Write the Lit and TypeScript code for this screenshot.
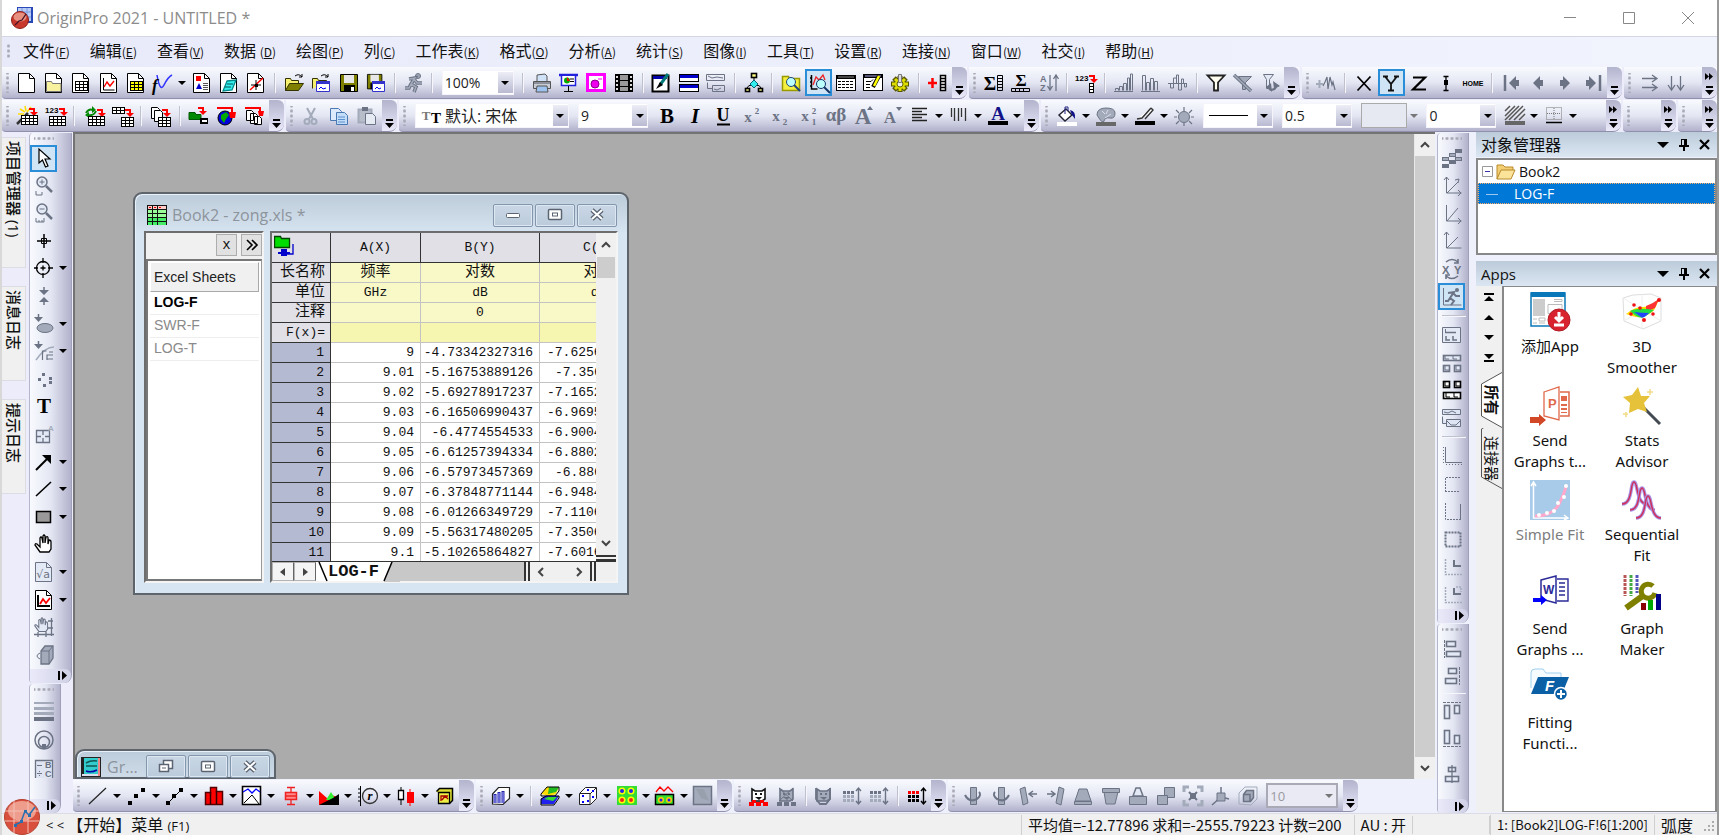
import { LitElement, html, css, nothing } from "lit";
import { customElement, property } from "lit/decorators.js";
import { classMap } from "lit/directives/class-map.js";
import { styleMap } from "lit/directives/style-map.js";
import { unsafeSVG } from "lit/directives/unsafe-svg.js";

/* ---------- icon drawing helpers ---------- */
const G = "#6b7384";
const L = "#a3abbb";
const p = (d: string, s = "#000", f = "none", w = 1) =>
  `<path d="${d}" stroke="${s}" fill="${f}" stroke-width="${w}"/>`;
const f = (d: string, c = "#000") => `<path d="${d}" fill="${c}"/>`;
const t = (x: number, y: number, s: string, size: number, c = "#000", extra = "") =>
  `<text x="${x}" y="${y}" font-size="${size}" fill="${c}" ${extra}>${s}</text>`;
const SERIF = `font-family="Liberation Serif" font-weight="bold" text-anchor="middle"`;
const SMALL = `font-family="Liberation Sans" font-weight="bold"`;
const page = (c = "#000", bg = "#fff") => p("M1.5 .5h11l5 5v14h-16z", c, bg) + p("M12.5 .5v5h5", c);
const cells = (x: number, y: number, c = 3, r = 3, line = "#000", bg = "#fff") => {
  let s = `<rect x="${x}" y="${y}" width="${c * 4 + 1}" height="${r * 3 + 1}" fill="${line}"/>`;
  for (let i = 0; i < c; i++)
    for (let j = 0; j < r; j++)
      s += `<rect x="${x + 1 + i * 4}" y="${y + 1 + j * 3}" width="3" height="2" fill="${bg}"/>`;
  return s;
};
const redDrop = (x: number, y: number) =>
  p(`M${x} ${y}h5v3`, "#f00", "none", 2) + f(`M${x + 1} ${y + 3}h8l-4 4z`, "#f00");
const frame = (c = G, bg = "#e4e9f6") => p("M.5 2.5h18v15h-18z", c, bg);
const miniL = (x: number, y: number, c = G) => p(`M${x} ${y}v4h4`, c, "none", 1);
const box = (x: number, y: number, w: number, h: number, c = G, bg = "#e4e9f6") =>
  `<rect x="${x + 0.5}" y="${y + 0.5}" width="${w}" height="${h}" fill="${bg}" stroke="${c}" stroke-width="1.6"/>`;
const magn = (x: number, y: number, c: string, bg: string) =>
  p(`M${x + 3} ${y + 3}l6 6`, c, "none", 2) + `<circle cx="${x}" cy="${y}" r="4.5" fill="${bg}" stroke="${c}"/>`;
const hand = (c: string, bg: string) =>
  p("M6 18L1 11q0-2 2-1l3 3V4q1-2 2 0l1 5V2q1-2 2 0v7l1-6q2-1 2 1v6l1-4q2 0 2 2v7l-2 3z", c, bg, 1.3);
const floppy = (x: number, y: number, s: number) =>
  `<g transform="translate(${x} ${y}) scale(${s})">` +
  p("M.5 .5h17v17h-17z", "#000", "#808000") + f("M4 1h10v8H4z", "#e8e8e8") + f("M4 11h11v7H4z") + f("M11 13h3v4h-3z", "#fff") + "</g>";
const axes = (c = G) => p("M4.5 1v16h15", c) + p("M2 4l2.5-3L7 4", c) + p("M5 17L16 6", c);
const ticks = "M3.5 1v15.5H20";
const cat = (c: string, bg: string) =>
  p("M3 15V3l3 2h7l3-2v10l-3 2z", c, bg, 1.6) + f("M6 7h2v2H6zM11 7h2v2h-2z", c) + f("M6 11h7l-3 3z", c);
const dots = (c: string, mid = c) => {
  let s = "";
  for (let i = 0; i < 3; i++)
    for (let j = 0; j < 3; j++)
      s += `<rect x="${1 + i * 4}" y="${5 + j * 4}" width="3" height="3" fill="${j === 0 ? mid : c}"/>`;
  return s;
};
const upDown = (c: string) => p("M16.500 2v16M14 5l2.500-3 2.500 3M14 15l2.500 3 2.500-3", c, "none", 1.4);

const ICONS: Record<string, string> = {
  "new-project": page(),
  "new-folder": page() + p("M2.500 18.500v-10h5l1 2h8.500v8z", "#777", "#f8f2a0"),
  "new-book": page() + cells(4, 8, 3, 3, "#000", "#fff"),
  "new-graph": page() + p("M4.500 5v12h11", "#000", "none", 1) + p("M5 14l3-5 3 4 4-5", "#f00", "none", 1.4),
  "new-matrix": page() + cells(4, 8, 3, 3, "#000", "#ff0"),
  "new-function": p("M4 2q3 18 7 10t8-10", "#33f", "none", 1.500) + t(-1, 18, "f", 17, "#000", `font-family="Liberation Serif" font-style="italic" font-weight="bold"`),
  "new-layout": page() + f("M4 3h5v5H4z", "#f00") + f("M4 16l3-6 3 6z", "#00c") + p("M11 10.500h5M11 12.500h5M11 14.500h5M11 16.500h5", "#555"),
  "new-notes": page() + p("M8 8l9-1-4 10-9 1z", "#088", "#3ee", 1.300) + p("M8 11h6M6 14h6", "#055"),
  "new-image": page() + p("M4 17L17 5", "#f00", "none", 1.500) + p("M10 7v10M5 12h10") + f("M9 11h3v3H9z"),
  "open": p("M1.500 17.500v-12h5l1 2h7v3", "#330", "#f5ef6e") + p("M1.500 17.500l4-7h14l-5 7z", "#330", "#808000") + p("M11 3q4-3 7 1m0-3v3h-3"),
  "open-excel": p("M1.500 15.500v-10h5l1 2h8v3", "#330", "#f5ef6e") + p("M10 3q4-3 7 1m0-3v3h-3") + p("M5.500 9.500h13v9h-13z", "#33c", "#fff") + f("M5 8h14v3H5z", "#33c") + p("M8 16l2-2 2 2 3-1", "#00f"),
  "save": floppy(1, 1, 1),
  "save-as": floppy(1, 1, 0.850) + p("M6.500 9.500h12v9h-12z", "#33c", "#fff") + f("M6 8h13v3H6z", "#33c") + p("M9 16l2-2 2 2 2-1", "#00f"),
  "runner": `<circle cx="14" cy="3" r="2.500" fill="${L}" stroke="${G}"/>` + p("M5 6l6-1-4 6 5 3-2 5M7 11l-2 4H1M10 6l3 4h5", G, "none", 3.500) + p("M5 6l6-1-4 6 5 3-2 5M7 11l-2 4H1M10 6l3 4h5", L, "none", 1.500),
  "print": p("M5 8V2l8-1 2 2v5", "#555", "#cfe2f8") + p("M1.500 8.500h17v7h-17z", "#555", "#c8ccd4") + p("M5 13h10l1 6H4z", "#555", "#9dc3ee") + f("M2 9h16v2H2z", "#8a8f99"),
  "slide": p("M0 2h19", "#22d", "none", 2.500) + p("M2.500 3v9.500h14V3", "#22d", "#fff", 1.500) + `<circle cx="8" cy="7.500" r="3" fill="#0a0"/>` + f("M8 4v4h3z", "#f00") + p("M11 6h4M11 8.500h4M9.500 13v5M5 18.500h9"),
  "movie": f("M0 0h20v19H0z", "#f0f") + f("M3 3h14v13H3z", "#fff") + `<circle cx="9" cy="11" r="4" fill="#e0e" stroke="#808"/>` + p("M12 6h4", "#f0f"),
  "film": f("M1 1h18v18H1z") + f("M6 2h8v5H6zM6 8h8v5H6zM6 14h8v4H6z", "#999") + f("M2 3h2v2H2zM2 7h2v2H2zM2 11h2v2H2zM2 15h2v2H2zM16 3h2v2h-2zM16 7h2v2h-2zM16 11h2v2h-2zM16 15h2v2h-2z", "#ddd"),
  "edit-graph": p("M1.500 2.500h16v16h-16z", "#000", "#fff", 2) + f("M2 3h14v3H2z", "#00a") + p("M17 1L9 12", "#077", "none", 3) + f("M5 16l4-7 3 3z"),
  "split": f("M0 1h20v8H0zM0 11h20v8H0z") + f("M1 2h18v3H1zM1 12h18v3H1z", "#00c") + f("M1 5h18v3H1zM1 15h18v3H1z", "#fff"),
  "merge": p("M.5 1.500h18v6H.5zM6.500 12.500h12v6h-12zM1.500 9.500v6h5", G) + p("M2 3l4 2 5-1 6 1M8 16l3 1 4-2", G),
  "tree": p("M10 5v4M8 12q-4 0-5 3M12 12q4 0 5 3") + box(7, 0, 5, 4, "#000", "#ff8") + p("M10 7l4 4-4 4-4-4z", "#067", "#3ee") + box(1, 15, 4, 3, "#000", "#ff8") + box(14, 15, 4, 3, "#000", "#ff8"),
  "find-folder": p("M1.500 17.500V3.500h6l1 2h10v12z", "#990", "#f5ef3e", 1.500) + magn(10, 9, "#247", "#bff"),
  "zoom-graph": p("M2.500 2v14h6M1 5h2M1 9h2M1 13h2", "#000", "none", 1.500) + p("M4 12l3-8 3 3 4-5 2 5", "#e22", "none", 1.300) + magn(12, 11, "#136", "#bff"),
  "sheet": f("M0 2h20v16H0z") + f("M1 6h18v11H1z", "#fff") + f("M2 3h16v2H2z", "#444") + p("M2 8.500h3m1 0h3m1 0h3m1 0h3M2 11.500h3m1 0h3m1 0h3m1 0h3M2 14.500h3m1 0h3m1 0h3m1 0h3"),
  "sheet-edit": f("M0 1h20v17H0z") + f("M1 5h18v12H1z", "#fff") + f("M2 2h16v2H2z", "#557") + p("M3 8.500h5l2-2M3 11.500h4M3 14.500h4") + p("M16 3l-6 11", "#000", "none", 4) + p("M16 3l-5 10", "#ff0", "none", 2.500),
  "gear": p("M10 3v16M1 11h18M4 5l12 12M16 5L4 17", "#550", "none", 5) + p("M10 4v14M2 11h16M5 6l10 10M15 6L5 16", "#dd0", "none", 3) + `<circle cx="10" cy="11" r="5" fill="#dd0"/><circle cx="10" cy="11" r="3" fill="#eee" stroke="#660"/>` + p("M8.500 1.500h3v8h-3z", "#777", "#ddd"),
  "add-col": p("M0 10h9M4.500 5v10", "#f00", "none", 2.500) + p("M12.500 2.500h5v15h-5zM13 5.500h5M13 8.500h5M13 11.500h5M13 14.500h5", "#000", "#fff", 1.500),
  "sum-col": t(6, 17, "Σ", 19, "#000", SERIF) + p("M13.500 2.500h5v15h-5zM13 5.500h6M13 8.500h6M13 11.500h6M13 14.500h6"),
  "sum-row": t(10, 13, "Σ", 17, "#000", SERIF) + p("M.5 15.500h18v3H.5zM4.500 15v4M8.500 15v4M12.500 15v4"),
  "sort": t(1, 9, "A", 9, G, SMALL) + t(1, 18, "Z", 9, G, SMALL) + p("M11 2v14M8.500 13l2.500 4 2.500-4M17 18V3M14.500 6L17 2l2.500 4", G, "none", 1.300),
  "fill-123": t(-1, 8, "123", 8, "#000", SMALL) + redDrop(13, 3) + `<g transform="translate(2 0)">${cells(11, 10, 1, 3)}</g>`,
  "bars-up": p("M1.500 17.500v-2h3v2M5.500 17.500v-4h3v4M9.500 17.500v-7h3v7M13.500 17.500V5h2v12.500M16.500 17.500V1h2v16.500M0 18.500h19", G),
  "bars": p("M1.500 17.500V2.500h3v15M5.500 17.500v-8h3v8M9.500 17.500v-12h3v12M13.500 17.500v-9h3v9M0 18.500h19", G),
  "bars-dev": p("M0 10.500h19M2.500 10v5h3v-5M5.500 10V5h3v5M8.500 10V2h2v8M10.500 10v7h3v-7M13.500 10V6h2v4M16.500 10v4h2v-4", G),
  "filter": p("M1.500 2.500h17l-6.500 7v8h-4v-8z", "#222", "#fffef0", 1.800),
  "filter-off": p("M5.500 3.500h13l-6 6v7h-3v-7z", G, L) + p("M1 2l17 16", G, "none", 3.500) + p("M1 2l17 16", L, "none", 1.500),
  "filter-redo": p("M2.500 1.500h10l-4 5v9h-3v-9z", G, "#e4e9f6") + f("M12 8l7 5-6 3zM5 14l5-4 1 9z", G) + p("M8 16q5 2 7-2", G, "none", 2),
  "peaks": p("M0 11h7M3.500 7v8", L, "none", 2) + p("M7 13l2-4 2-5 1 12 2-12 2 8 1-3 2 8", G, "none", 1.200),
  "x": p("M3.500 3.500l13 14M16.500 3.500l-13 14", "#000", "none", 1.800),
  "y": p("M2 3.500h5M13 3.500h5M4.500 4l5.500 7 5.500-7M10 11v7M7 17.500h6", "#111", "none", 1.800),
  "z": p("M4 4.500h12L4 16.500h13", "#000", "none", 2.200),
  "err": p("M10 3v14M7.500 3.500h5M7.500 17.500h5", "#000", "none", 1.300) + f("M8 7h4v5H8z"),
  "home": t(10, 13, "HOME", 7, "#000", `${SMALL} text-anchor="middle"`),
  "first": p("M4 2v16", G, "none", 2.500) + f("M8 10l7-7v4h3v6h-3v4z", G),
  "prev": f("M5 10l7-7v4h3v6h-3v4z", G),
  "next": f("M15 10L8 3v4H5v6h3v4z", G),
  "last": p("M17 2v16", G, "none", 2.500) + f("M13 10L6 3v4H3v6h3v4z", G),
  "arrows-right": p("M3 5.500h15M13 2l5 3.500L13 9M3 14.500h15M13 11l5 3.500-5 3.500", G, "none", 1.300),
  "arrows-down": p("M5.500 3v14M2 12l3.500 5L9 12M14.500 3v14M11 12l3.500 5 3.500-5", G, "none", 1.300),

  "wizard": p("M0 18L11 7", "#333", "none", 2.500) + p("M8 0l1 5M3 3l5 3M14 1l-4 5M1 8h6", "#fd0", "none", 1.500) + redDrop(12, 3) + cells(4, 9, 4, 3),
  "import-ascii": t(0, 7, "123", 8, "#000", SMALL) + redDrop(14, 3) + cells(4, 10, 4, 3),
  "reimport": p("M2 7q3-5 7-3M12 5q-2 5-8 4", "#080", "none", 2) + f("M8 0l4 4-4 3zM5 6v6L1 9z", "#080") + redDrop(13, 4) + cells(4, 10, 4, 3),
  "clone-import": cells(0, 1, 3, 2) + redDrop(13, 4) + cells(9, 11, 3, 3, "#000", "#fff"),
  "import-pages": p("M1.500 1.500h6l2 2v9h-8z", "#000", "#fff") + p("M4.500 4.500h6l2 2v9h-8z", "#000", "#fff") + redDrop(12, 4) + cells(8, 11, 3, 3),
  "connect-folder": p("M0 6.500h6l1 2h5v5H0z", "#050", "#080") + redDrop(9, 2) + f("M11 12h8v6h-8z") + f("M13 14h5v2h-5z", "#fff"),
  "connect-web": `<circle cx="8" cy="12" r="7" fill="#00d" stroke="#000"/>` + f("M4 9l5-3 3 3-3 4-2 4-3-4z", "#0a0") + p("M0 2h15v4", "#f00", "none", 2) + f("M12 6h7l-1 6h-5z", "#f00"),
  "connect-pages": p("M1.500 4.500h5l2 2v8h-7zM5.500 7.500h5l2 2v8h-7zM9.500 10.500h5l2 2v6h-7z", "#000", "#fff") + p("M0 2h15v4", "#f00", "none", 2) + f("M13 5h6l-1 5h-4z", "#f00"),
  "cut": p("M6 2l6 11M14 2L8 13", L, "none", 2) + `<circle cx="6" cy="15.500" r="2.500" fill="none" stroke="${L}" stroke-width="2"/><circle cx="13" cy="15.500" r="2.500" fill="none" stroke="${L}" stroke-width="2"/>`,
  "copy": p("M1.500 2.500h8l3 3v9h-11z", "#4a78b0", "#dceafb") + p("M7.500 6.500h8l3 3v9h-11z", "#4a78b0", "#c3dcf7") + p("M9 11h7M9 13.500h7M9 16h7", "#5d92d0"),
  "paste": p("M1.500 3.500h13v13h-13z", L, "#b8bdca", 2) + f("M5 1h6v4H5z", G) + p("M8.500 7.500h7l3 3v8h-10z", G, "#e6eaf2"),
  "bold": t(10, 17, "B", 21, "#000", SERIF),
  "italic": t(10, 17, "I", 21, "#000", SERIF + ` font-style="italic"`),
  "underline": t(10, 15, "U", 18, "#000", SERIF) + p("M4 18.500h13", "#000", "none", 2),
  "sup": t(7, 16, "x", 15, G, SERIF) + t(16, 8, "2", 9, G, SERIF),
  "sub": t(7, 15, "x", 15, G, SERIF) + t(16, 19, "2", 9, G, SERIF),
  "supsub": t(7, 15, "x", 15, G, SERIF) + t(16, 8, "2", 9, G, SERIF) + t(16, 19, "1", 9, G, SERIF),
  "greek": t(10, 15, "αβ", 19, G, SERIF),
  "bigger": t(9, 18, "A", 23, G, SERIF) + f("M13 4l3-4 3 4z", G),
  "smaller": t(8, 17, "A", 17, G, SERIF) + f("M14 1h6l-3 4z", G),
  "align": p("M2 2.500h15M2 5.500h10M2 8.500h15M2 11.500h10M2 14.500h15", "#222", "none", 1.500),
  "columns": p("M2.500 2v9M5.500 2v13M9.500 2v13M12.500 2v9M16.500 2v13", "#333", "none", 1.300),
  "font-color": t(10, 14, "A", 19, "#118", SERIF) + f("M0 15h20v4H0z"),
  "fill": p("M9 3l6 6-7 6-6-6z", "#223", "#fff", 1.400) + p("M8 8V1h3v4", "#228") + f("M13 4q6 1 5 9l-3-4z", "#118") + f("M0 16h20v4H0z", "#fff"),
  "palette": p("M1 9q0-7 9-7t9 5q0 6-5 5t-6 3-7-6z", G, L) + p("M6 5l3 3m3-4l-2 4m5 0l-6 4", "#dde") + f("M0 16h20v4H0z", "#686868"),
  "line-color": p("M16 2L7 12l-5 1M16 2l2 2-8 9", "#333", "#fff", 1.400) + f("M0 15h20v4H0z"),
  "light": `<circle cx="10" cy="11" r="5.500" fill="${L}" stroke="${G}"/>` + p("M10 1v4M2 4l3 3M18 4l-3 3M0 11h3M17 11h3M2 18l3-3M18 18l-3-3M10 17v3", G, "none", 1.200),
  "pattern": p("M0 5l5-5M0 10L10 0M0 14L14 0M4 14L18 0M9 14L20 3M14 14l6-6", "#555", "none", 1.500) + f("M0 15h20v4H0z", "#666"),
  "borders": `<path d="M2.500 1.500h15v12h-15zM10 2v12M3 7.500h14" fill="none" stroke="#777" stroke-dasharray="1 1"/>` + p("M2 16.500h16", "#000", "none", 1.500),

  "pointer": p("M5 1v14l3.500-3 3 7 2.500-1-3-7h5z", "#000", "#fff", 1.200),
  "zoom-in": `<circle cx="8" cy="6" r="5" fill="#e4e9f6" stroke="${G}" stroke-width="1.500"/>` + p("M5.500 6h5M8 3.500v5M2 15v4h6v-3", G) + p("M12 10l6 6", G, "none", 2.500),
  "zoom-out": `<circle cx="8" cy="6" r="5" fill="#e4e9f6" stroke="${G}" stroke-width="1.500"/>` + p("M5.500 6h5M2 15v4h8v-4M5 17v2M8 17v2", G) + p("M12 10l6 6", G, "none", 2.500),
  "reader": p("M10 3v14M3 10h14", "#000", "none", 1.500) + p("M7.500 7.500h5v5h-5z"),
  "target": `<circle cx="9" cy="10" r="6.500" fill="none" stroke="#000" stroke-width="1.300"/>` + p("M9 0v5M9 15v5M0 10h4M14 10h5M6.500 10h5M9 7.500v5", "#000", "none", 1.300),
  "select-range": p("M10 1v6M10 19v-6", G, "none", 1.500) + f("M5 4h10l-5 5zM5 16h10l-5-5z", G),
  "mask": f("M0 3h9l-4.500 5z", G) + p("M4.500 0v4", G, "none", 1.500) + `<ellipse cx="11" cy="14" rx="8" ry="4.500" fill="${L}" stroke="${G}"/>`,
  "mask-curve": f("M0 3h9l-4.500 5z", G) + p("M4.500 0v4", G, "none", 1.500) + p("M2 19Q11 6 20 6", L, "none", 1.500) + p("M8.500 19v-9h4M13 19v-5h6M13 18h6M15 11h4", G, "none", 1.200),
  "draw-dots": f("M8 4h3v3H8zM15 8h3v3h-3zM4 9h3v3H4zM15 12h3v3h-3zM9 15h3v3H9z", G),
  "text": t(10, 17, "T", 21, "#000", SERIF),
  "grid-a": p("M2.500 6.500h13v12h-13zM9 7v4M9 14v4M3 12.500h4M11 12.500h4", G, "#e4e9f6", 1.300) + t(14, 7, "A", 8, L, SMALL),
  "arrow": p("M2 18L14 6", "#000", "none", 2) + f("M17 3v9L8 3z"),
  "line": p("M2 17L17 3", "#000", "none", 1.600),
  "line-thin": p("M1 18L18 2", "#222", "none", 1.200),
  "rect": p("M2.500 4.500h14v11h-14z", "#000", "#999", 1.500),
  "pan": hand("#000", "#fff"),
  "formula": page(G, "#e4e9f6") + t(9, 16, "√a", 11, G, `font-family="DejaVu Sans" text-anchor="middle"`),
  "insert-graph": page() + p("M4 5v11h12", "#000", "none", 2) + p("M6 14l3-5 3 4 4-5", "#f00", "none", 1.800),
  "pan-axis": `<g transform="scale(.8)">${hand(G, "#e4e9f6")}</g>` + p("M17.500 1v18M14 4h5M14 11h5M0 17.500h20M4 15v5M12 15v5", G, "none", 1.300),
  "cube": p("M7 6l4-5h8v12l-4 6H7z", G, L, 1.300) + p("M7 6h8v13M15 6l4-5", G) + p("M6 8q-6 3 0 6", G),
  "lines": f("M0 1h20v2H0z", L) + f("M0 6h20v3H0zM0 11h20v3H0z", L) + f("M0 16h20v4H0z", G),
  "arc": `<circle cx="10" cy="10" r="9" fill="none" stroke="${G}" stroke-width="1.500"/><circle cx="10" cy="12" r="5.500" fill="none" stroke="${G}" stroke-width="1.500"/>` + f("M8 14h4v5H8z", G),
  "legend": p("M1.500 19V1.500h17V19", G, "#dfe4f2", 1.300) + p("M3 6.500h5M3 14.500h5M5.500 12v1M5.500 16v1", G) + t(11, 9, "B", 9, G, SMALL) + t(11, 18, "C", 9, G, SMALL),

  "layers": f("M13 1h7v4h-7zM7 5h7v4H7zM0 9h7v4H0zM13 9h7v4h-7zM7 12h7v4H7zM0 16h7v4H0z", G) + f("M8 6h5v2H8zM1 10h5v2H1zM14 10h5v2h-5z", L),
  "axis-diag": axes() + p("M13 4l4-1-1 4M16 14l3 3-3 3", G),
  "axis-right": p("M4.500 1v16h15M5 17L16 4M16 14l3 3-3 3", G),
  "axis-up": axes(),
  "swap-xy": t(0, 15, "X", 11, G, SMALL) + t(12, 15, "Y", 11, G, SMALL) + p("M4 3q6-5 12 0m0-3v4h-4M16 17q-6 5-12 0m0 3v-4h4", G, "none", 1.600),
  "speed": p("M1.500 1v17h18", G) + `<circle cx="15" cy="3" r="2" fill="${G}"/>` + p("M6 6l6-1-4 6 4 3-3 4M8 11l-2 3H3M11 6l3 3h4", G, "none", 2),
  "layout-1": frame() + p("M3 7.500h11M4 11v4h4M11 11v4h4", G, "none", 1.500) + p("M3.500 4v3", G),
  "layout-2": box(1, 2, 17, 5) + box(1, 12, 6, 6) + box(12, 12, 6, 6) + miniL(3, 2) + miniL(11, 2) + miniL(3, 13) + miniL(14, 13),
  "layout-3": box(1, 1, 6, 6, "#000", "#fff") + box(12, 1, 6, 6, "#000", "#fff") + box(1, 12, 17, 6, "#000", "#fff") + miniL(3, 2, "#000") + miniL(14, 2, "#000") + miniL(4, 13, "#000") + miniL(12, 13, "#000"),
  "layout-4": p("M.5 1.500h18v5H.5zM4.500 11.500h14v7h-14zM.5 8.500v7h4", G, "#dfe4f2") + p("M2 4l4 1 4-2 4 2M5 13l4 4h5l4-4", G),
  "frame-l": `<path d="${ticks}" fill="none" stroke="${G}"/><path d="M1.500 1v16M4 18.500h16" stroke="${G}" stroke-dasharray="1 2" fill="none"/>`,
  "frame-t": `<path d="M3.500 18V3.500H18M3 17.500h15" fill="none" stroke="${G}" stroke-dasharray="2 1"/>`,
  "frame-r": `<path d="M3.500 1v16.500h15V2" fill="none" stroke="${G}" stroke-dasharray="2 1"/><path d="M18.500 2v16" stroke="${G}"/>`,
  "frame-all": `<path d="M3.500 3.500h15v14h-15z" fill="none" stroke="${G}" stroke-width="2" stroke-dasharray="2 1"/>`,
  "frame-in": `<path d="M3.500 2v15.500H20" fill="none" stroke="${L}" stroke-width="1.500" stroke-dasharray="2 1"/>` + p("M12 3v6h7", G, "none", 2),
  "frame-in2": `<path d="M3.500 2v15.500H20M14 2h5v5" fill="none" stroke="${L}" stroke-width="1.500" stroke-dasharray="2 1"/>` + p("M12 3v6h7", G, "none", 2),
  "al-left": `<path d="M2.500 1v18" stroke="${G}" stroke-dasharray="3 1"/>` + box(4, 2, 9, 5) + box(4, 12, 14, 5),
  "al-right": `<path d="M17.500 1v18" stroke="${G}" stroke-dasharray="3 1"/>` + box(6, 2, 8, 5) + box(3, 12, 11, 5),
  "al-top": `<path d="M1 1.500h18" stroke="${G}" stroke-dasharray="3 1"/>` + box(2, 4, 5, 13) + box(12, 4, 5, 8),
  "al-bottom": `<path d="M1 18.500h18" stroke="${G}" stroke-dasharray="3 1"/>` + box(2, 2, 5, 13) + box(12, 7, 5, 8),
  "al-center": box(6, 3, 7, 4) + box(3, 12, 13, 5) + p("M10 1v18", G, "none", 1.300),

  "scatter": f("M1 15h4v4H1zM7 8h4v4H7zM14 2h4v4h-4z"),
  "line-symbol": p("M3 17l6-6 8-8") + f("M1 15h4v4H1zM7 8h4v4H7zM14 2h4v4h-4z"),
  "column": p("M1.500 18.500v-12h5v-5h6v4h6v13z", "#500", "#f00", 1.500) + p("M6.500 6v12M12.500 5v13", "#300", "none", 1.500),
  "multi": p("M.5 .5h18v18H.5z", "#000", "#fff", 1.600) + p("M1 6l5-3 4 4 4-4 4 3", "#00f", "none", 1.300) + p("M2 17l8-8 7 9"),
  "box-plot": p("M10 1v5M10 14v5M6 1.500h8M6 18.500h8", "#e22", "none", 1.300) + p("M4.500 6.500h11v7h-11zM5 10h10", "#e22", "#f88", 1.500),
  "area": f("M0 5v14h20v-7l-7-3-4 4z", "#f00") + f("M7 14l5-8 5 8z", "#3e3") + f("M0 19l14-7 6-4v11z"),
  "polar": p("M2.500 0v20M0 3h2M0 7h2M0 11h2M0 15h2") + `<circle cx="12" cy="10" r="7.500" fill="none" stroke="#333" stroke-width="1.300"/>` + t(12, 14, "r", 13, "#000", SERIF + ` font-style="italic"`),
  "stock": p("M5 1v18") + p("M2.500 4.500h5v9h-5z", "#000", "#fff", 1.300) + p("M14 3v17", "#f00") + f("M11 6h7v11h-7z", "#f00"),
  "template": p("M1.500 5.500l3-3h13v12l-3 3", "#000", "#dd3", 1.500) + p("M3.500 6.500h11v11h-11z", "#000", "#ee4", 1.300) + p("M6 15v-5h7M7 14l3-4 3 3", "#a00", "none", 1.300),
  "bars-3d": p("M1.500 18V8l6-6.500h11v11L12 18.500z", "#222", "#fff", 1.200) + p("M4 17V8M8 17V6M12 17V5", "#22a", "none", 3) + p("M4 17V9M8 17V7M12 17V6", "#aaf", "none", 1),
  "surface": f("M1 8l6-7h12l-3 7-6 2z", "#fd0") + f("M9 1h10l-3 5-8 2z", "#2b2") + p("M1 8l6-7h12v4l-4 5H1z", "#000", "none") + f("M1 13l4-3h14l-5 8H1z", "#22e") + f("M4 13l4-2h9l-4 4z", "#3d3") + p("M1 18v-5l5-3h13v2l-5 7H1z"),
  "scatter-3d": p("M1.500 7.500l6-6h11v11l-6 6h-11zM2 7.500h10v11M12 8l6-6", "#222", "#fff") + f("M4 9h2v2H4zM9 14h2v2H9zM4 15h2v2H4zM14 10h2v2h-2zM9 3h2v2H9zM14 4h2v2h-2z", "#00f"),
  "contour": f("M0 0h20v19H0z", "#3d3") + `<g fill="#ff0"><circle cx="5" cy="5" r="3.500"/><circle cx="14" cy="5" r="3.500"/><circle cx="5" cy="14" r="3.500"/><circle cx="14" cy="14" r="3.500"/></g><g fill="#e22"><circle cx="5" cy="14" r="2"/><circle cx="14" cy="14" r="2"/></g><g fill="#22e"><circle cx="5" cy="5" r="2"/><circle cx="14" cy="5" r="2"/></g>`,
  "profile": p("M1 6l4-5 4 4 4-4 5 5", "#f00", "none", 1.300) + p("M.5 8.500h18v10H.5z", "#000", "#3d3", 1.500) + `<circle cx="6" cy="14" r="3" fill="#fc0"/><circle cx="14" cy="14" r="3" fill="#fc0"/><circle cx="6" cy="14" r="1.500" fill="#22e"/><circle cx="14" cy="14" r="1.500" fill="#22e"/>`,
  "image": p("M.5 .5h18v18H.5z", G, L, 1.500) + f("M3 3h8l5 12-8-3z", "#98a0ae"),
  "cat": cat("#111", "#fff") + f("M0 16h5v4H0zM7 16h5v4H7zM14 16h5v4h-5zM3 14h4v3H3zM11 14h4v3h-4z", "#f00"),
  "cat-off": cat(G, L) + f("M0 16h5v4H0zM7 16h5v4H7zM14 16h5v4h-5z", G) + p("M2 2l14 13M16 2L2 15", G),
  "cat-mask": cat(G, L) + p("M2 2v11l4 5h6l4-5V2", G, "none", 1.800),
  "dots-1": dots(L, G) + upDown(G),
  "dots-2": dots(L, G) + upDown(G),
  "dots-3": dots("#000", "#f00") + upDown("#000"),
  "spin-l": p("M7.500 1.500h6v17h-6z", G, L) + p("M2 9q4 8 12 4 5-4 2-7", G, "none", 2),
  "spin-r": p("M7.500 1.500h6v17h-6z", G, L) + p("M18 9q-4 8-12 4-5-4-2-7", G, "none", 2),
  "tilt-l": p("M2 3l5-2 3 16-5 2z", G, L) + p("M19 8h-7M15 5l-4 3 4 3", G, "none", 1.500),
  "tilt-r": p("M18 3l-5-2-3 16 5 2z", G, L) + p("M1 8h7M5 5l4 3-4 3", G, "none", 1.500),
  "persp-up": p("M6 3h8l4 12H2z", G, L) + p("M1.500 15.500h17v3h-17z", G, L),
  "persp-down": p("M5 18h9l3-12H3z", G, L) + p("M1.500 2.500h17v4h-17z", G, L),
  "persp-mid": p("M5 10l3-8h4l3 8z", G, "#e4e9f6", 1.500) + p("M1.500 10.500h17v8h-17z", G, L),
  "resize-3d": p("M8.500 1.500h10v10h-10z", G, L) + p("M1.500 9.500h10v9h-10z", G, L),
  "fit-3d": p("M6 6l8 8M14 6l-8 8", G, "none", 2) + f("M7 7h6v6H7z", G) + p("M1 6V1h5M14 1h5v5M19 14v5h-5M6 19H1v-5", L, "none", 3),
  "axes-3d": p("M10 1v10l8 2M10 11l-9 8", G, "none", 1.500) + p("M6 7h8v8H6z", G, L),
  "frame-3d": p("M1 18V7l6-6h12v12l-6 6z", L) + p("M5.500 8.500l3-4h7v7l-3 4h-7zM6 8.500h6v7", G, L, 1.500),
};

const APP_ART: Record<string, string> = {
  add: p("M1 1h34v33H1z", "#0a78b8", "#fff", 1.500) + f("M1 0h34v5H1z", "#0a78b8") + f("M3 7h12v17H3z", "#ccc") + p("M18 12.500h14v9H18zM24 7.500h8v2h-8M3 27h4M9 26h6v3H9zM3 31h4M9 31h6", "#bbb") + `<circle cx="29" cy="28" r="11" fill="#d8232e" stroke="#b01c26"/>` + p("M29 20v8M25 25l4 4 4-4M24 33h10", "#fff", "none", 3),
  smoother: p("M1 6l10-3 18-1 10 4v23l-18 8-19-8z", "#ddd") + p("M20 2v35M1 6l38 23M39 6L2 29", "#eee") + f("M4 22q10-8 16-7t17-8q-3 8-5 11t-9 6-19-2z", "#fd0") + f("M24 14q8-3 13-7l-4 9-9 4z", "#f33") + f("M8 19q8-4 24-1-5 4-10 7t-14-6z", "#2d4") + f("M12 20q9 1 15 1-6 6-8 4z", "#24f") + `<g fill="#e11"><circle cx="37" cy="8" r="2"/><circle cx="12" cy="13" r="1.800"/><circle cx="9" cy="22" r="1.800"/><circle cx="31" cy="22" r="1.800"/><circle cx="22" cy="28" r="2"/><circle cx="18" cy="16" r="1.800"/></g>`,
  ppt: p("M14 6l15-5v33l-15-4z", "#e0694b", "#fff", 1.300) + p("M30 6h9v24H30", "#e0694b", "#fff", 1.500) + t(18, 22, "P", 13, "#e0694b", SMALL) + f("M31 10h6v5h-6zM31 18h6v2h-6zM31 22h6v2h-6zM31 26h6v1h-6z", "#e0694b") + f("M0 31h9v-3l7 6-7 6v-3H0z", "#d24726"),
  wand: p("M20 20l18 18", "#444a52", "none", 3) + f("M16 1l3 9 9 0-6 7 3 9-9-3-9 4 1-10-7-6 9-2z", "#e5c23a") + p("M28 3v6M25 6h6M4 26v5M1 28h5", "#f3dc8a", "none", 1.500),
  fit: f("M0 0h40v40H0z", "#a9cbea") + p("M3.500 3v35H38M1 6l2.500-4L6 6M34 35l4 3-4 2", "#fff", "none", 1.500) + p("M5 36q18 0 24-12T36 6", "#ffa8cc", "none", 3) + `<g fill="#fff"><circle cx="9" cy="35" r="2"/><circle cx="17" cy="33" r="2"/><circle cx="24" cy="31" r="2"/><circle cx="28" cy="23" r="2"/><circle cx="34" cy="17" r="2"/><circle cx="36" cy="6" r="2"/></g>`,
  seq: [[0, 24, 22], [8, 30, 22], [14, 38, 22]].map(([x, y, h]) => { const d = `M${x} ${y}c11 0 8-${h} 12-${h}s2 ${h} 13 ${h}`; return p(d, "#a794e6", "none", 3.500) + p(d, "#d0305a", "none", 1.500); }).join(""),
  word: p("M11 6l15-4v27l-15-4z", "#2b2b99", "#fff", 1.500) + p("M27 5h11v22H27M29 9h6M29 13h6M29 17h6M29 21h6", "#2b2b99", "none", 1.400) + t(13, 20, "W", 12, "#2b2b99", SMALL) + f("M3 24h8v-3l6 5-6 5v-3H3z", "#00f"),
  maker: `<path d="M3 1v21" stroke-width="3" stroke-dasharray="3 1" stroke="#b55"/><path d="M9 1v21" stroke-width="3" stroke-dasharray="3 1" stroke="#4a4"/><path d="M15 1v18" stroke-width="3" stroke-dasharray="3 1" stroke="#55b"/>` + p("M4 34l18-13", "#808000", "none", 6) + `<path d="M31 12a7 7 0 1 0 2 7" fill="none" stroke="#808000" stroke-width="5"/>` + f("M19 29h5v7h-5z", "#800") + f("M26 26h5v10h-5z", "#0a0") + f("M34 20h5v16h-5z", "#008"),
  folder: p("M1 20V5q0-4 4-4h8l3 4h15v4", "#9fd0f0", "#f6fbff") + f("M8 9h31l-7 17H1z", "#0b5fa5") + t(15, 23, "F", 15, "#fff", `${SMALL} font-style="italic"`) + `<circle cx="31" cy="26" r="6.500" fill="#0b5fa5" stroke="#fff" stroke-width="1.500"/>` + p("M27 26h8M31 22v8", "#fff", "none", 2),
};

/* ---------- toolbar ---------- */
interface Combo { kind: string; value: string; label: string; off?: boolean }
type Item = string | Combo;

@customElement("tool-bar")
class ToolBar extends LitElement {
  @property({ type: Array }) items: Item[] = [];
  @property({ type: Boolean, reflect: true }) vertical = false;
  @property({ type: Boolean }) clipped = false;

  static styles = css`
    :host {
      display: flex;
      align-items: center;
      justify-content: space-between;
      box-sizing: border-box;
      height: 32px;
      background: linear-gradient(#f8fafe, #e4e7f3 50%, #b2b2cc);
      border-bottom: 1px solid #9090ad;
      border-radius: 0 0 8px 4px;
      overflow: hidden;
    }
    :host([vertical]) {
      flex-direction: column;
      align-items: stretch;
      height: auto;
      background: linear-gradient(to right, #f8fafe, #e4e7f3 50%, #b2b2cc);
      border: 0;
      border-right: 1px solid #a0a0ba;
      border-left: 1px solid #b4b6cc;
      border-radius: 4px 0 8px 4px;
    }
    svg { display: block; width: 20px; height: 20px; overflow: visible; }
    button { flex: none; border: 0; padding: 0; background: none; display: grid; place-items: center; font: inherit; }
    .item { display: flex; align-items: center; }
    .btn { width: 27px; height: 27px; border: 1px solid transparent; }
    .btn.on { background: #cfe4f5; border: 2px solid #2a8dd8; }
    .arr { width: 11px; height: 20px; }
    .tri { border: 4px solid transparent; border-top-color: #000; border-bottom: 0; }
    .tri.off { border-top-color: #777; }
    .sep { width: 2px; height: 20px; margin: 0 4px; background: linear-gradient(to right, #bfc1ce 50%, #f6f6fc 50%); }
    .gap { width: 12px; flex: none; }
    .grip { width: 11px; height: 20px; flex: none; background: radial-gradient(circle, #a9a9b6 1px, transparent 2px) center / 5px 5px repeat-y; }
    .more { width: 15px; height: 32px; flex: none; background: linear-gradient(#b3b4cd, #dadaee 70%, #ececfa); display: flex; flex-direction: column; align-items: center; justify-content: flex-end; border-radius: 0 6px 0 0; }
    .more svg { width: 9px; height: 9px; margin: 0 0 4px; }
    .more.two { justify-content: space-between; padding-top: 5px; box-sizing: border-box; }
    :host([vertical]) .grip { width: 20px; height: 11px; margin: 0 4px; background: radial-gradient(circle, #a9a9b6 1px, transparent 2px) center / 5px 5px repeat-x; }
    :host([vertical]) .sep { width: 24px; height: 2px; margin: 4px; background: linear-gradient(#bfc1ce 50%, #f6f6fc 50%); }
    :host([vertical]) .gap { height: 12px; }
    :host([vertical]) .more { width: auto; height: 14px; background: linear-gradient(to right, #eaeafa, #d0d0e6); align-items: flex-end; justify-content: center; padding-right: 4px; }
    :host([vertical]) .more svg { margin: 0; }
    .combo { display: flex; align-items: center; position: relative; height: 25px; background: #fff; margin: 0 4px; box-sizing: border-box; border: 1px solid #f4f4fa; }
    .combo select { appearance: none; border: 0; background: none; font: 14px "Open Sans", "Noto Sans CJK SC", sans-serif; color: #222; width: 100%; height: 100%; padding: 0 18px 0 2px; margin: 0; border-radius: 0; }
    .drop { position: absolute; right: 0; top: 1px; bottom: 1px; width: 15px; background: linear-gradient(#ecedf6, #b9bad2); display: grid; place-items: center; pointer-events: none; }
    .combo.zoom { width: 72px; }
    .combo.face { width: 154px; }
    .combo.face select { padding-left: 29px; font-size: 16px; }
    .combo.face .tt { position: absolute; left: 6px; top: 2px; pointer-events: none; }
    .combo.size { width: 70px; }
    .combo.blank { width: 46px; background: #e6e8f2; border: 1px solid #aaa; margin-right: 14px; }
    .combo.blank .drop { right: -15px; background: none; }
    .combo.depth { width: 72px; background: #e9eaf4; border: 2px solid #a9aab6; }
    .combo.depth select { color: #777; font-size: 13px; }
    .combo.depth .drop { background: none; }
    .stroke { position: absolute; left: 5px; right: 24px; top: 11px; height: 1px; background: #000; pointer-events: none; }
  `;

  private drawItem(it: Item) {
    if (typeof it !== "string") {
      return html`<span class="combo ${it.kind}">
        ${it.kind === "face" ? html`<svg class="tt" viewBox="0 0 20 20">${unsafeSVG(t(4, 14, "T", 13, "#777", SERIF) + t(14, 17, "T", 15, "#000", SERIF))}</svg>` : nothing}
        <select aria-label=${it.label} ?disabled=${!!it.off}><option>${it.value}</option></select>
        ${it.kind.includes("stroked") ? html`<span class="stroke"></span>` : nothing}
        <span class="drop"><i class=${classMap({ tri: true, off: !!it.off })}></i></span>
      </span>`;
    }
    if (it === "|") return html`<span class="sep"></span>`;
    if (it === "_") return html`<span class="gap"></span>`;
    const on = it.endsWith("*");
    const menu = it.endsWith(">");
    const name = it.replace(/[*>]$/, "");
    return html`<span class="item">
      <button class=${classMap({ btn: true, on })} aria-label=${name}><svg viewBox="0 0 20 20">${unsafeSVG(ICONS[name])}</svg></button>
      ${menu ? html`<button class="arr" aria-label="${name} menu"><i class="tri"></i></button>` : nothing}
    </span>`;
  }

  render() {
    const chev = html`<svg viewBox="0 0 9 9">${unsafeSVG(f("M0 1l4 3.500-4 3.500zM4 1l4 3.500-4 3.500z"))}</svg>`;
    return html`<span class="grip"></span>${this.items.map((i) => this.drawItem(i))}
      <button class=${classMap({ more: true, two: this.clipped && !this.vertical })} aria-label="more">
        ${this.clipped && !this.vertical ? chev : nothing}
        <svg viewBox="0 0 9 9">${unsafeSVG(this.vertical ? f("M0 0h2v9H0zM4 0l5 4.500L4 9z") : f("M1 0h7v2H1zM0 4h9L4.500 9z"))}</svg>
      </button>`;
  }
}

const sel = (kind: string, value: string, label: string, off = false): Combo => ({ kind, value, label, off });

const ROW1: Item[][] = [
  ["new-project", "new-folder", "new-book", "new-graph", "new-matrix", "new-function>", "new-layout", "new-notes", "new-image", "|", "open", "open-excel", "save", "save-as", "|", "runner", "|", sel("zoom", "100%", "缩放"), "|", "print", "slide", "movie", "film", "|", "edit-graph", "split", "merge", "|", "tree", "|", "find-folder", "zoom-graph*", "sheet", "sheet-edit", "gear", "|", "add-col"],
  ["sum-col", "sum-row", "sort", "|", "fill-123", "|", "bars-up", "bars", "bars-dev", "|", "filter", "filter-off", "filter-redo"],
  ["peaks", "|", "x", "y*", "z", "err", "home", "|", "first", "prev", "next", "last"],
  ["arrows-right", "arrows-down", "_"],
];
const ROW2: Item[][] = [
  ["wizard", "import-ascii", "|", "reimport", "clone-import", "|", "import-pages", "|", "connect-folder", "connect-web", "connect-pages"],
  ["cut", "copy", "paste"],
  [sel("face", "默认: 宋体", "字体"), sel("size", "9", "字号"), "bold", "italic", "underline", "sup", "sub", "supsub", "greek", "bigger", "smaller", "align>", "columns>", "font-color>"],
  ["fill>", "palette>", "line-color>", "light", sel("size stroked", "", "线型"), sel("size", "0.5", "线宽"), sel("blank", "", "图案", true), sel("size", "0", "透明度"), "pattern>", "borders>", "_", "_"],
  ["_", "_"],
  ["_"],
];
const BOTTOM: Item[][] = [
  ["line-thin>", "scatter>", "line-symbol>", "column>", "multi>", "box-plot>", "area>", "polar>", "stock>", "template"],
  ["bars-3d>", "|", "surface>", "scatter-3d>", "contour>", "profile>", "image"],
  ["cat", "cat-off", "|", "cat-mask", "dots-1", "dots-2", "|", "dots-3"],
  ["spin-l", "spin-r", "tilt-l", "tilt-r", "persp-up", "persp-down", "persp-mid", "resize-3d", "fit-3d", "axes-3d", "frame-3d", sel("depth", "10", "深度", true)],
];
const TOOLS: Item[][] = [
  ["pointer*", "zoom-in", "zoom-out", "reader", "target>", "select-range", "mask>", "mask-curve>", "draw-dots", "text", "grid-a", "arrow>", "line>", "rect>", "pan", "formula>", "insert-graph>", "pan-axis", "cube"],
  ["lines", "arc", "legend", "_"],
];
const LAYERS: Item[][] = [
  ["layers", "axis-diag", "axis-right", "axis-up", "swap-xy", "speed*", "|", "layout-1", "layout-2", "layout-3", "layout-4", "|", "frame-l", "frame-t", "frame-r", "frame-all", "frame-in", "frame-in2"],
  ["al-left", "al-right", "|", "al-top", "al-bottom", "|", "al-center", "_"],
];
const MENU: [string, string][] = [
  ["文件", "F"], ["编辑", "E"], ["查看", "V"], ["数据 ", "D"], ["绘图", "P"], ["列", "C"], ["工作表", "K"], ["格式", "O"], ["分析", "A"],
  ["统计", "S"], ["图像", "I"], ["工具", "T"], ["设置", "R"], ["连接", "N"], ["窗口", "W"], ["社交", "I"], ["帮助", "H"],
];
const DATA: [string, string, string][] = [
  ["9", "-4.73342327316", "-7.6256"], ["9.01", "-5.16753889126", "-7.356"], ["9.02", "-5.69278917237", "-7.1652"],
  ["9.03", "-6.16506990437", "-6.9695"], ["9.04", "-6.4774554533", "-6.9004"], ["9.05", "-6.61257394334", "-6.8802"],
  ["9.06", "-6.57973457369", "-6.886"], ["9.07", "-6.37848771144", "-6.9484"], ["9.08", "-6.01266349729", "-7.1106"],
  ["9.09", "-5.56317480205", "-7.3506"], ["9.1", "-5.10265864827", "-7.6016"],
];
const APPS: [string, string[], boolean?][] = [
  ["add", ["添加App"]], ["smoother", ["3D", "Smoother"]], ["ppt", ["Send", "Graphs t..."]], ["wand", ["Stats", "Advisor"]],
  ["fit", ["Simple Fit"], true], ["seq", ["Sequential", "Fit"]], ["word", ["Send", "Graphs ..."]], ["maker", ["Graph", "Maker"]],
  ["folder", ["Fitting", "Functi..."]],
];
const WIN = {
  min: `<rect x="3.500" y="8.500" width="13" height="4" rx="1" fill="#fff" stroke="#5b6472"/>`,
  max: `<rect x="3.500" y="4.500" width="13" height="10" rx="1" fill="#fff" stroke="#5b6472" stroke-width="1.500"/><rect x="7.500" y="8" width="5" height="3" fill="#fff" stroke="#5b6472"/>`,
  restore: `<rect x="7.500" y="3.500" width="9" height="8" fill="#fff" stroke="#5b6472" stroke-width="1.500"/><rect x="3.500" y="7.500" width="9" height="7" fill="#fff" stroke="#5b6472" stroke-width="1.500"/><path d="M6 11h4" stroke="#5b6472"/>`,
  close: p("M5 5l10 9M15 5L5 14", "#5b6472", "none", 4.500) + p("M5 5l10 9M15 5L5 14", "#fff", "none", 2),
};
const HEAD_ART = f("M0 4h12L6 10z");
const PIN = f("M3 1h6v7H3z") + f("M4 2h2v5H4z", "#cdd9e6") + f("M1 7h10v2H1zM5 9h2v4H5z");
const CROSS = p("M1 2l9 9M10 2l-9 9", "#000", "none", 2.200);
const svgBox = (cls: string, vb: string, art: string) => html`<svg class=${cls} viewBox=${vb}>${unsafeSVG(art)}</svg>`;

/* ---------- application shell ---------- */
@customElement("app-root")
class AppRoot extends LitElement {
  static styles = css`
    :host {
      display: grid;
      grid-template-rows: auto auto auto minmax(0, 1fr) auto;
      height: 100vh;
      box-sizing: border-box;
      position: relative;
      overflow: hidden;
      background: #ececfa;
      border-left: 2px solid #d8d8d8;
      border-right: 2px solid #9a9a9a;
      font: 15px/20px "Open Sans", "Noto Sans CJK SC", sans-serif;
      color: #111;
    }
    button { font: inherit; border: 0; padding: 0; background: none; display: grid; place-items: center; color: inherit; }
    svg { display: block; }
    .title { display: flex; align-items: center; height: 37px; background: #fff; border-bottom: 1px solid #d5d6e4; box-sizing: border-box; color: #8c8c8c; font-size: 16px; }
    .title .logo { width: 22px; height: 22px; margin: 0 4px 0 9px; }
    .title h1 { font: inherit; margin: 0; flex: 1; }
    .title button { width: 59px; height: 36px; }
    .title button svg { width: 14px; height: 14px; }
    .menu { display: flex; align-items: center; height: 28px; padding-bottom: 2px; gap: 20px; padding-left: 4px; background: linear-gradient(to right, #e8eafa, #f1f4fd); font-size: 16px; }
    .menu .grip { width: 5px; height: 16px; margin-right: -8px; background: radial-gradient(circle, #a9a9b6 1px, transparent 2px) center / 5px 5px repeat-y; }
    .menu button { display: block; white-space: nowrap; font-family: "Noto Sans CJK SC", sans-serif; }
    .menu small { font-size: 12px; }
    .bars { display: grid; gap: 1px; padding-bottom: 0; }
    .row { display: flex; gap: 2px; min-width: 0; }
    .main { display: grid; grid-template-columns: 25px 46px minmax(0, 1fr) 36px 246px; min-height: 0; }
    .tabs { display: flex; flex-direction: column; gap: 18px; padding-top: 5px; }
    .tabs button { writing-mode: vertical-rl; text-orientation: sideways; background: #f0f0f0; border: 1px solid #dcdce4; border-left: 0; width: 24px; font-size: 15px; line-height: 20px; font-weight: 500; display: flex; align-items: center; justify-content: flex-start; padding: 3px 0 30px; white-space: pre; }
    .side { display: flex; flex-direction: column; padding: 1px 1px 0 2px; gap: 1px; min-height: 0; }
    .side .second { width: 32px; }
    .center { display: grid; grid-template-rows: minmax(0, 1fr) auto; min-width: 0; min-height: 0; }
    .mdi { position: relative; background: #ababab; border: 2px solid #737373; border-right: 0; border-bottom: 0; display: flex; justify-content: flex-end; min-height: 0; overflow: hidden; }
    .scroll { display: flex; flex-direction: column; width: 20px; background: #cdcdcd; border-left: 1px solid #e8e8e8; }
    .scroll button { height: 22px; background: #f0f0f0; }
    .scroll button:first-child { margin-bottom: auto; }
    .scroll svg { width: 12px; height: 12px; }
    .strip { display: flex; padding: 1px 77px 1px 0; gap: 2px; background: #eef1fb; }
    .right { display: flex; flex-direction: column; gap: 1px; padding: 1px 2px 0; min-height: 0; background: #eef1fb; }
    .right .first, .side .first { flex: none; }
    .side .first { height: 550px; }
    .right .first { height: 490px; }
    .right .second, .side .second { flex: 1; min-height: 0; }

    .win { position: absolute; box-sizing: border-box; border: 2px solid #5e646c; border-radius: 9px 9px 0 0; background: linear-gradient(#bdccda, #d7e4f1 40px); box-shadow: inset 1px 1px 0 #e8f1fa; }
    .win header { display: flex; align-items: center; color: #8d949c; font-size: 16px; }
    .win h2 { font: inherit; margin: 0; flex: 1; white-space: nowrap; }
    .wb { width: 40px; height: 23px; margin-left: 2px; box-sizing: border-box; border: 1px solid #8496ac; border-radius: 2px; background: linear-gradient(#c9d7e5, #bccbdb); box-shadow: inset 0 0 0 1px #dde7f1; }
    .wb svg, .ico { width: 20px; height: 20px; }
    .book { left: 58px; top: 58px; width: 496px; height: 403px; display: grid; grid-template-rows: 37px minmax(0, 1fr); padding: 0 9px 10px; }
    .book header { padding: 5px 1px 0 3px; }
    .book .ico { margin-right: 5px; }
    .mini { left: 0; bottom: 0; width: 201px; height: 30px; padding: 0 4px; }
    .mini header { padding: 4px 0 0; }
    .mini .ico { margin-right: 6px; }
    .panes { display: grid; grid-template-columns: 120px minmax(0, 1fr); gap: 6px; min-height: 0; }
    .pane { border: 2px solid #6d6d6d; border-right-color: #f4f4f4; border-bottom-color: #f4f4f4; background: #f0f0f0; min-width: 0; min-height: 0; }
    .list { display: grid; grid-template-rows: 26px minmax(0, 1fr); }
    .lbar { display: flex; justify-content: flex-end; gap: 4px; padding: 1px 0; }
    .lbar button { width: 21px; height: 22px; border: 1px solid #adadad; box-sizing: border-box; background: #e1e1e1; font: 14px/14px "Liberation Mono", monospace; }
    .lbar svg { width: 14px; height: 14px; }
    .lbody { background: #fff; border: 2px solid #777; border-right: 1px solid #999; padding: 1px 2px; font: 14px/21px "Liberation Sans", sans-serif; }
    .lbody ul, .lbody li { margin: 0; padding: 0; list-style: none; }
    .lbody h3 { font: inherit; margin: 0; height: 30px; line-height: 28px; box-sizing: border-box; background: #f0f0f0; border: 1px solid #a8a8a8; border-left-color: #fff; border-top-color: #fff; padding-left: 3px; color: #222; }
    .lbody li { box-sizing: border-box; height: 23px; padding-left: 4px; border-bottom: 1px solid #eee; color: #8a8a8a; }
    .lbody li.cur { color: #000; font-weight: bold; }
    .sheet { display: grid; grid-template-columns: minmax(0, 1fr) 20px; grid-template-rows: minmax(0, 1fr) 20px; }
    .view { overflow: hidden; background: #fff; }
    table { border-spacing: 0; table-layout: fixed; width: 386px; font: 13px/18px "Liberation Mono", "Noto Sans CJK SC", monospace; }
    .c0 { width: 59px; } .c1 { width: 90px; } .c2 { width: 119px; } .c3 { width: 118px; }
    th, td { box-sizing: border-box; height: 20px; padding: 0 6px 0 0; border: 1px solid #c3c3c3; border-top: 0; border-left: 0; font-weight: normal; white-space: nowrap; overflow: hidden; line-height: 18px; }
    thead th { height: 30px; background: #e0e0e6; border-color: #333; padding: 0; }
    tbody th { text-align: right; background: #b5bad3; border-color: #333; }
    tbody .meta th { background: #e0e0e6; padding-right: 5px; }
    tbody .meta .cjk { font-size: 15px; line-height: 14px; }
    .meta td { background: #f9f9c8; text-align: center; padding: 0; }
    .meta.fx td { background: #f6f6b0; }
    .num td { text-align: right; }
    .num td:last-child { text-align: left; padding-left: 7px; }
    .num td.short:last-child { padding-left: 15px; }
    .corner { width: 22px; height: 22px; margin: 0 0 4px 2px; }
    .vs { display: flex; flex-direction: column; align-items: center; background: #f0f0f0; border-bottom: 6px double #333; }
    .vs svg { width: 12px; height: 12px; margin: 6px 0; }
    .vs i { width: 18px; height: 21px; background: #cdcdcd; margin-bottom: auto; }
    .foot { grid-column: 1 / -1; display: flex; background: #c8c8c8; border-top: 1px solid #333; box-sizing: border-box; }
    .foot > button { width: 22px; background: #f4f4f4; border: 1px solid #b4b4b4; border-right-color: #666; }
    .foot svg { width: 10px; height: 10px; }
    .tab { position: relative; width: 84px; padding-left: 12px; box-sizing: border-box; font: bold 17px/20px "Liberation Mono", monospace; background: #fff; }
    .foot .edge { width: 84px; height: 20px; position: absolute; left: 0; top: 0; }
    .tab b { position: relative; }
    .hs { margin-left: auto; width: 72px; background: #f0f0f0; border-left: 6px double #333; border-right: 6px double #333; display: flex; align-items: center; justify-content: space-between; padding: 0 6px; box-sizing: border-box; }
    .foot .end { width: 20px; background: #f0f0f0; }

    .dock { display: flex; flex-direction: column; padding: 0 0 1px 5px; background: #eef1fb; min-height: 0; }
    .dock header { display: flex; align-items: center; height: 25px; flex: none; padding: 0 6px 0 5px; gap: 9px; background: linear-gradient(#bccbda, #dbe6f2); }
    .dock header h2 { font: inherit; font-size: 15px; margin: 0; flex: 1; }
    .dock header .cn { font-size: 16px; line-height: 18px; }
    .dock header svg { width: 12px; height: 13px; }
    .treebox { height: 93px; border: 2px solid #888; background: #fff; margin: 1px 0 6px; flex: none; font: 14px/21px "Open Sans", sans-serif; }
    .node { display: flex; align-items: center; height: 23px; padding-left: 4px; gap: 3px; }
    .node .exp { width: 11px; height: 11px; }
    .node .fold { width: 20px; height: 18px; }
    .leaf { display: block; height: 21px; padding-left: 36px; background: #0078d7; color: #fff; outline: 1px dotted #ffb066; outline-offset: -1px; text-decoration: none; background-image: linear-gradient(#9cc8f0, #9cc8f0); background-size: 12px 1px; background-position: 8px 11px; background-repeat: no-repeat; }
    .appbox { flex: 1; min-height: 0; display: grid; grid-template-columns: 26px minmax(0, 1fr); background: #f0f0f0; }
    .nav { display: flex; flex-direction: column; align-items: center; padding-top: 1px; }
    .nav > button { height: 20px; width: 26px; }
    .nav > button svg { width: 10px; height: 10px; }
    .nav > .pick { position: relative; display: block; writing-mode: vertical-rl; text-orientation: sideways; width: 21px; margin-left: 5px; font-size: 15px; line-height: 21px; text-align: center; z-index: 1; }
    .nav > .pick.all { font-weight: bold; margin-top: 5px; height: 56px; }
    .nav > .pick.con { height: 61px; }
    .nav > .pick .shape { position: absolute; left: 0; top: 0; width: 100%; height: 100%; z-index: -1; }
    .grid { display: grid; grid-template-columns: repeat(2, 92px); grid-auto-rows: 94px; align-content: start; background: #fff; border: 1px solid #888; border-left-width: 2px; border-right-width: 2px; padding: 5px 0 0; }
    .app { display: flex; flex-direction: column; align-items: center; text-align: center; font: 15px/21px "Noto Sans", "Noto Sans CJK SC", sans-serif; }
    .app svg { width: 40px; height: 40px; margin-bottom: 4px; flex: none; overflow: visible; }
    .app.off { color: #7d7d7d; }
    .app span { display: block; }
    .status { display: flex; align-items: center; height: 20px; padding-top: 1px; background: #f0f0f0; border-top: 1px solid #dcdce6; font-size: 14px; padding-left: 44px; }
    .status .go { font-size: 16px; flex: 1; display: flex; gap: 3px; align-items: center; }
    .status small { font-size: 13px; }
    .status .cell { border-left: 1px solid #cfcfcf; padding: 0 6px; white-space: nowrap; font-family: "Noto Sans CJK SC", sans-serif; font-size: 15px; }
    .status .avg { margin-right: 6px; }
    .status .void { width: 64px; border-right: 1px solid #cfcfcf; height: 18px; }
    .status .sel { font-size: 13px; }
    .status .unit { font-size: 16px; }
    .status .dots { width: 12px; height: 12px; margin: 4px 2px 0 4px; }
    .orb { position: absolute; left: 2px; bottom: 0; width: 37px; height: 36px; }
    .orb svg { width: 37px; height: 36px; }
  `;

  private bar(items: Item[], clipped = false) {
    const grow = items.filter((i) => i !== "|").length;
    return html`<tool-bar .items=${items} ?clipped=${clipped} style=${styleMap({ flexGrow: String(grow) })}></tool-bar>`;
  }

  private book() {
    const art = f("M0 0h20v20H0z", "#111") + [1, 6, 11, 15].map((x) => f(`M${x} 1h4v3h-4z`, "#fcc") + [5, 9, 13, 17].map((y) => f(`M${x} ${y}h4v3h-4z`, y < 13 ? "#9f9" : "#4e6")).join("")).join("") + f("M2 2h2v1H2zM7 2h2v1H7zM12 2h2v1h-2z", "#e00");
    return html`<section class="win book">
      <header>
        ${svgBox("ico", "0 0 20 20", art)}
        <h2>Book2 - zong.xls *</h2>
        <button class="wb" aria-label="minimize">${svgBox("", "0 0 20 20", WIN.min)}</button>
        <button class="wb" aria-label="maximize">${svgBox("", "0 0 20 20", WIN.max)}</button>
        <button class="wb" aria-label="close">${svgBox("", "0 0 20 20", WIN.close)}</button>
      </header>
      <div class="panes">
        <div class="pane list">
          <div class="lbar"><button>x</button><button aria-label="collapse">${svgBox("", "0 0 14 14", p("M2 2l5 5-5 5M7 2l5 5-5 5", "#000", "none", 1.600))}</button></div>
          <div class="lbody"><h3>Excel Sheets</h3><ul><li class="cur">LOG-F</li><li>SWR-F</li><li>LOG-T</li></ul></div>
        </div>
        <div class="pane sheet">
          <div class="view"><table>
            <colgroup><col class="c0"><col class="c1"><col class="c2"><col class="c3"></colgroup>
            <thead><tr>
              <th>${svgBox("corner", "0 0 22 22", p("M.5 4V1.500h6l1 2h8v9H.5z", "#040", "#0d0", 1.300) + p("M19 9v10h-6", "#00c", "none", 1.300) + f("M4 17h12v2H4zM7 14h6v7H7z", "#00c"))}</th>
              <th>A(X)</th><th>B(Y)</th><th>C(Y)</th></tr></thead>
            <tbody>
              <tr class="meta"><th class="cjk">长名称</th><td class="cjk">频率</td><td class="cjk">对数</td><td class="cjk">对数</td></tr>
              <tr class="meta"><th class="cjk">单位</th><td>GHz</td><td>dB</td><td>dB</td></tr>
              <tr class="meta"><th class="cjk">注释</th><td></td><td>0</td><td></td></tr>
              <tr class="meta fx"><th>F(x)=</th><td></td><td></td><td></td></tr>
              ${DATA.map((r, i) => html`<tr class="num"><th>${i + 1}</th><td>${r[0]}</td><td>${r[1]}</td><td class=${classMap({ short: r[2].length < 7 })}>${r[2]}</td></tr>`)}
            </tbody></table></div>
          <div class="vs">${svgBox("", "0 0 12 12", p("M2 8l4-4 4 4", "#444", "none", 2))}<i></i>${svgBox("", "0 0 12 12", p("M2 4l4 4 4-4", "#444", "none", 2))}</div>
          <div class="foot">
            <button aria-label="previous sheet">${svgBox("", "0 0 10 10", f("M7 1v8L2 5z", "#444"))}</button>
            <button aria-label="next sheet">${svgBox("", "0 0 10 10", f("M3 1v8l5-4z", "#444"))}</button>
            <div class="tab">${svgBox("edge", "0 0 84 20", f("M76 0h8v20H68z", "#c8c8c8") + p("M3 0l8 19M76 0l-8 19", "#000", "none", 1.500))}<b>LOG-F</b></div>
            <div class="hs">${svgBox("", "0 0 10 10", p("M7 1L3 5l4 4", "#444", "none", 2))}${svgBox("", "0 0 10 10", p("M3 1l4 4-4 4", "#444", "none", 2))}</div>
            <span class="end"></span>
          </div>
        </div>
      </div>
    </section>`;
  }

  render() {
    const headTools = html`${svgBox("", "0 0 12 13", HEAD_ART)}${svgBox("", "0 0 12 13", PIN)}${svgBox("", "0 0 12 13", CROSS)}`;
    return html`
      <div class="title">
        ${svgBox("logo", "0 0 22 22", f("M6 0h16v16H6z", "#2a49b8") + f("M7 1h13v13H7z", "#b9ccf5") + p("M11 1v13M16 1v13M7 5h13M7 10h13", "#7d9be0") + `<circle cx="9" cy="13" r="8.500" fill="#c8382c" stroke="#8d1f18"/><ellipse cx="9" cy="10" rx="6.500" ry="4.500" fill="#e8907f"/>` + p("M4 18l4-4 3-1 4-6", "#412", "none", 1.300))}
        <h1>OriginPro 2021 - UNTITLED *</h1>
        <button aria-label="minimize">${svgBox("", "0 0 14 14", p("M1 6.500h12", "#888"))}</button>
        <button aria-label="maximize">${svgBox("", "0 0 14 14", p("M1.500 1.500h11v11h-11z", "#888"))}</button>
        <button aria-label="close">${svgBox("", "0 0 14 14", p("M1 1l12 12M13 1L1 13", "#888"))}</button>
      </div>
      <nav class="menu"><span class="grip"></span>${MENU.map(([n, k]) => html`<button>${n}<small>(<u>${k}</u>)</small></button>`)}</nav>
      <div class="bars">
        <div class="row">${ROW1.map((b, i) => this.bar(b, i === 3))}</div>
        <div class="row">${ROW2.map((b, i) => this.bar(b, i > 2))}</div>
      </div>
      <div class="main">
        <div class="tabs"><button>项目管理器 (1)</button><button>消息日志</button><button>提示日志</button></div>
        <div class="side"><tool-bar vertical class="first" .items=${TOOLS[0]}></tool-bar><tool-bar vertical class="second" .items=${TOOLS[1]}></tool-bar></div>
        <div class="center">
          <div class="mdi">
            ${this.book()}
            <section class="win mini"><header>
              ${svgBox("ico", "0 0 20 20", f("M0 0h20v20H0z", "#222") + f("M3 1h14v17H3z", "#3cc") + p("M5 6q5-3 11-2M5 9h11", "#155", "none", 1.500) + p("M5 14q5 2 11-1", "#00a", "none", 1.500) + f("M17 1h2v18h-2z", "#e88") + f("M1 17h16v2H1z", "#dde"))}
              <h2>Gr...</h2>
              <button class="wb" aria-label="restore">${svgBox("", "0 0 20 20", WIN.restore)}</button>
              <button class="wb" aria-label="maximize">${svgBox("", "0 0 20 20", WIN.max)}</button>
              <button class="wb" aria-label="close">${svgBox("", "0 0 20 20", WIN.close)}</button>
            </header></section>
            <div class="scroll">
              <button aria-label="scroll up">${svgBox("", "0 0 12 12", p("M2 8l4-4 4 4", "#444", "none", 2))}</button>
              <button aria-label="scroll down">${svgBox("", "0 0 12 12", p("M2 4l4 4 4-4", "#444", "none", 2))}</button>
            </div>
          </div>
          <div class="strip">${BOTTOM.map((b) => this.bar(b))}</div>
        </div>
        <div class="right"><tool-bar vertical class="first" .items=${LAYERS[0]}></tool-bar><tool-bar vertical class="second" .items=${LAYERS[1]}></tool-bar></div>
        <aside class="dock">
          <header><h2 class="cn">对象管理器</h2>${headTools}</header>
          <div class="treebox">
            <div class="node">${svgBox("exp", "0 0 11 11", p("M.5 .5h10v10H.5z", "#999", "#fff") + p("M3 5.500h5", "#33a"))}${svgBox("fold", "0 0 20 18", p("M1 16V2h6l2 2h8v3", "#b8892a", "#f2cf74") + p("M1 16L5 7h14l-4 9z", "#b8892a", "#fbe39a"))}Book2</div>
            <a class="leaf" href="#">LOG-F</a>
          </div>
          <header><h2>Apps</h2>${headTools}</header>
          <div class="appbox">
            <div class="nav">
              <button aria-label="top">${svgBox("", "0 0 10 10", f("M0 1h10v2H0zM5 4l5 5H0z"))}</button>
              <button aria-label="up">${svgBox("", "0 0 10 10", f("M5 3l5 5H0z"))}</button>
              <button aria-label="down">${svgBox("", "0 0 10 10", f("M5 8l5-5H0z"))}</button>
              <button aria-label="bottom">${svgBox("", "0 0 10 10", f("M0 8h10v2H0zM5 7l5-5H0z"))}</button>
              <button class="pick all">${svgBox("shape", "0 0 21 56", p("M21 .5L.5 12v32L21 55.500", "#555", "#fff"))}所有</button>
              <button class="pick con">${svgBox("shape", "0 0 21 61", p("M10 -5L.5 1v48L21 60.500", "#555", "#f0f0f0"))}连接器</button>
            </div>
            <div class="grid">${APPS.map(([a, lines, off]) => html`<button class=${classMap({ app: true, off: !!off })}>${svgBox("", "0 0 40 40", APP_ART[a])}${lines.map((l) => html`<span>${l}</span>`)}</button>`)}</div>
          </div>
        </aside>
      </div>
      <footer class="status">
        <span class="go"><small>&lt; &lt;</small> <span>【开始】菜单 <small>(F1)</small></span></span>
        <span class="cell avg">平均值=-12.77896 求和=-2555.79223 计数=200</span>
        <span class="cell">AU : 开</span>
        <span class="cell void"></span>
        <span class="cell sel">1: [Book2]LOG-F!6[1:200]</span>
        <span class="cell unit">弧度</span>
        ${svgBox("dots", "0 0 12 12", f("M9 0h2v2H9zM5 4h2v2H5zM9 4h2v2H9zM1 8h2v2H1zM5 8h2v2H5zM9 8h2v2H9z", "#aaa"))}
      </footer>
      <button class="orb" aria-label="start">${svgBox("", "0 0 37 36", `<circle cx="18" cy="18" r="17.500" fill="#d94f3d" stroke="#b5402f"/><ellipse cx="18" cy="12" rx="14" ry="10" fill="#ee9c8c"/>` + p("M1 12h34M1 22h34M10 2v32M24 2v32", "#f3c0b5") + p("M11 26l6-3 4-11 4 4 6-8", "#2a6fb0", "none", 1.500) + f("M10 25h3v3h-3zM16 21h3v3h-3zM20 11h3v3h-3zM24 15h3v3h-3z", "#2a6fb0"))}</button>
    `;
  }
}
